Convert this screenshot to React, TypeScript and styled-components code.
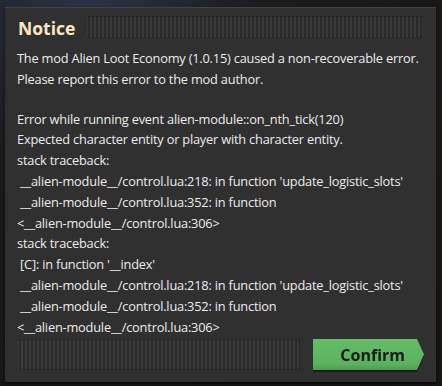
import styled, { createGlobalStyle } from "styled-components";

const message = [
  "The mod Alien Loot Economy (1.0.15) caused a non-recoverable error.",
  "Please report this error to the mod author.",
];

const details = [
  "Error while running event alien-module::on_nth_tick(120)",
  "Expected character entity or player with character entity.",
  "stack traceback:",
  " __alien-module__/control.lua:218: in function 'update_logistic_slots'",
  " __alien-module__/control.lua:352: in function",
  "<__alien-module__/control.lua:306>",
  "stack traceback:",
  " [C]: in function '__index'",
  " __alien-module__/control.lua:218: in function 'update_logistic_slots'",
  " __alien-module__/control.lua:352: in function",
  "<__alien-module__/control.lua:306>",
];

function App() {
  return (
    <>
      <GlobalStyle />
      <Frame>
        <Header>
          <Title>Notice</Title>
          <Filler $height={22} />
        </Header>
        <Body>
          <Paragraph>
            {message.map((line, i) => (
              <Line key={i}>{line}</Line>
            ))}
          </Paragraph>
          <Paragraph>
            {details.map((line, i) => (
              <Line key={i}>{line}</Line>
            ))}
          </Paragraph>
        </Body>
        <Footer>
          <Filler $height={31} />
          <ButtonWrap>
            <ConfirmButton>Confirm</ConfirmButton>
          </ButtonWrap>
        </Footer>
      </Frame>
    </>
  );
}

const GlobalStyle = createGlobalStyle`
  html, body {
    margin: 0;
    background: radial-gradient(circle at 20% 0%, #2a3346 0%, #1b1a1c 35%, #191412 100%);
    height: 100%;
    overflow: hidden;
  }
`;

const Frame = styled.div`
  margin: 7px 0 0 5px;
  width: 431px;
  height: 375px;
  box-sizing: border-box;
  padding: 8px 12px 11px 12px;
  background: #313031;
  border-top: 1px solid #444342;
  box-shadow: 0 2px 3px rgba(0, 0, 0, 0.7);
  display: flex;
  flex-direction: column;
  font-family: "Open Sans", sans-serif;
`;

const Header = styled.div`
  display: flex;
  align-items: center;
  height: 22px;
  gap: 11px;
`;

const Title = styled.div`
  font-size: 17.5px;
  font-weight: 700;
  color: #ffe6c0;
  padding-left: 1px;
  line-height: 22px;
  margin-top: 2px;
`;

const Filler = styled.div<{ $height: number }>`
  flex: 1;
  height: ${(p) => p.$height}px;
  background: repeating-linear-gradient(
    90deg,
    #3b3a3a 0px,
    #3b3a3a 2px,
    #2b2a2a 2px,
    #2b2a2a 4px
  );
  box-shadow: inset 0 0 2px rgba(0, 0, 0, 0.6);
`;

const Body = styled.div`
  flex: 1;
  padding-top: 10px;
  display: flex;
  flex-direction: column;
  gap: 19px;
  color: #ececec;
  font-size: 12.8px;
  letter-spacing: -0.2px;
`;

const Paragraph = styled.div`
  display: flex;
  flex-direction: column;
`;

const Line = styled.div`
  white-space: pre;
  line-height: 20.8px;
  height: 20.8px;
`;

const Footer = styled.div`
  display: flex;
  align-items: center;
  gap: 13px;
  margin-bottom: 1px;
`;

const ButtonWrap = styled.div`
  filter: drop-shadow(0 2px 0 #1c1b1a);
`;

const ConfirmButton = styled.button`
  width: 111px;
  height: 31px;
  border: none;
  background: linear-gradient(#66bd69, #5bb35f 80%, #4c9c50);
  clip-path: polygon(0 0, calc(100% - 7px) 0, 100% 50%, calc(100% - 7px) 100%, 0 100%);
  font-family: "Open Sans", sans-serif;
  font-weight: 700;
  font-size: 16px;
  color: #1a1a1a;
  text-align: right;
  padding: 0 19px 0 0;
  cursor: pointer;
`;

export default App;
